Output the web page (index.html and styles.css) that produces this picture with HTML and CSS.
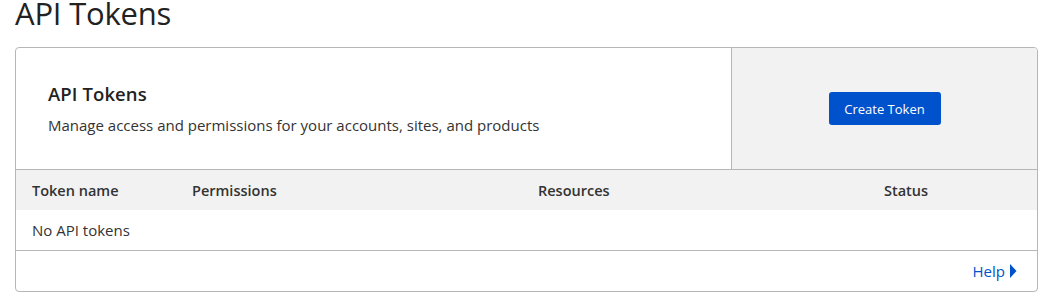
FILE: index.html
```html
<!DOCTYPE html>
<html lang="en">
<head>
  <meta charset="UTF-8" />
  <meta name="viewport" content="width=device-width, initial-scale=1.0" />
  <title>API Tokens</title>
  <link rel="stylesheet" href="styles.css">
</head>
<body>
  <h1 class="page-title">API Tokens</h1>

  <div class="card">
    <div class="card-top">
      <div class="intro">
        <h2>API Tokens</h2>
        <p>Manage access and permissions for your accounts, sites, and products</p>
      </div>
      <div class="actions">
        <button class="create-btn">Create Token</button>
      </div>
    </div>

    <div class="table-head">
      <div>Token name</div><div>Permissions</div><div>Resources</div><div>Status</div>
    </div>
    <div class="table-empty">No API tokens</div>

    <div class="card-footer">
      <a href="#" class="help">Help
        <svg width="8" height="16" viewBox="0 0 8 16"><path d="M1 1 L7.5 8 L1 15 Z" fill="currentColor"/></svg>
      </a>
    </div>
  </div>
</body>
</html>
```

FILE: styles.css
```css
body { font-family: "Open Sans", "Noto Sans", sans-serif; margin: 0; padding: 0 25px 0 15px; background: white; color: #333; }
.page-title { font-size: 31px; font-weight: 500; line-height: 26px; margin: 0 0 21px; color: #222; letter-spacing: -0.2px; }
.card { border: 1px solid #b6b6b6; border-radius: 4px; overflow: hidden; }
.card-top { display: flex; height: 121px; border-bottom: 1px solid #b6b6b6; }
.intro { flex: 1; padding: 33px 32px 0; }
.intro h2 { font-size: 18.5px; font-weight: 600; margin: 0 0 9px; color: #222; letter-spacing: 0.1px; }
.intro p { font-size: 15px; margin: 0; }
.actions { width: 305px; background: #f2f2f2; border-left: 1px solid #b6b6b6; display: flex; align-items: center; justify-content: center; }
.create-btn { background: #0052cc; color: white; border: none; border-radius: 3px; font-family: inherit; font-size: 13px; width: 112px; height: 33px; cursor: pointer; }
.table-head { display: grid; grid-template-columns: 160px 346px 346px 1fr; background: #f2f2f2; height: 40px; align-items: center; font-weight: 600; font-size: 14.5px; }
.table-head div { padding-left: 16px; }
.table-empty { height: 40px; display: flex; align-items: center; padding-left: 16px; font-size: 15px; border-bottom: 1px solid #b6b6b6; }
.card-footer { height: 40px; display: flex; align-items: center; justify-content: flex-end; padding-right: 20px; }
.help { color: #0052cc; text-decoration: none; font-size: 15px; display: flex; align-items: center; gap: 4px; }
```
